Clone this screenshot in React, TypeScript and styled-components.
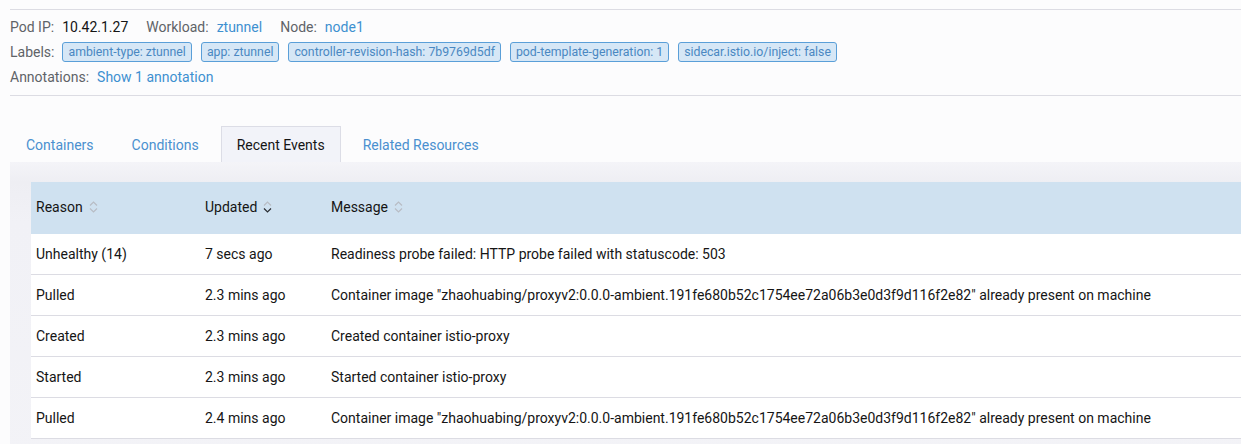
import styled, { createGlobalStyle } from "styled-components";

const GlobalStyle = createGlobalStyle`
  html, body {
    margin: 0;
    padding: 0;
    background: #fcfcfd;
    overflow: hidden;
  }
  body {
    font-family: Roboto, "Liberation Sans", sans-serif;
    font-size: 14px;
    color: #151515;
  }
`;

const Page = styled.div`
  padding: 9px 0 0 10px;
`;

const Details = styled.section`
  border-top: 1px solid #dcdce3;
  border-bottom: 1px solid #dcdce3;
  padding: 4px 0 6px 0;
  display: flex;
  flex-direction: column;
`;

const Row = styled.div`
  display: flex;
  align-items: center;
  height: 25px;
  gap: 6px;
`;

const Key = styled.span`
  color: #5f6368;
  margin-right: 2px;
`;

const Value = styled.span`
  color: #151515;
  margin-right: 12px;
`;

const Link = styled.a`
  color: #3e90d0;
  text-decoration: none;
  margin-right: 12px;
  cursor: pointer;
`;

const Chip = styled.span`
  display: inline-flex;
  align-items: center;
  height: 18px;
  padding: 0 5px;
  font-size: 12.3px;
  color: #4a88c2;
  background: #d6e7f6;
  border: 1px solid #5a9fd8;
  border-radius: 3px;
  margin-right: 3px;
`;

const Tabs = styled.nav`
  display: flex;
  margin-top: 30px;
`;

const Tab = styled.button<{ $active?: boolean }>`
  font: inherit;
  height: 36px;
  padding: 0 15px;
  margin-right: 6px;
  border: 1px solid ${(p) => (p.$active ? "#dcdde6" : "transparent")};
  border-bottom: none;
  background: ${(p) => (p.$active ? "#f2f3f9" : "transparent")};
  color: ${(p) => (p.$active ? "#151515" : "#4a90cf")};
  cursor: pointer;
`;

const Panel = styled.div`
  background: linear-gradient(#f4f4f8, #eeeef3 20px, #f1f1f6 60px, #f3f3f7);
  padding: 20px 0 0 21px;
  min-height: 300px;
`;

const Table = styled.table`
  width: 1300px;
  border-collapse: collapse;
  background: #ffffff;
`;

const HeadCell = styled.th<{ $w?: number }>`
  text-align: left;
  font-weight: 400;
  height: 52px;
  padding: 0 5px;
  background: #cfe1f0;
  width: ${(p) => (p.$w ? `${p.$w}px` : "auto")};
  white-space: nowrap;
`;

const Cell = styled.td`
  height: 40px;
  padding: 0 5px;
  border-bottom: 1px solid #dcdce3;
  white-space: nowrap;
`;

const SortWrap = styled.span`
  display: inline-block;
  vertical-align: middle;
  margin-left: 6px;
  position: relative;
  top: -1px;
`;

function SortIcon({ desc }: { desc?: boolean }) {
  return (
    <SortWrap>
      <svg width="9" height="12" viewBox="0 0 9 12">
        <path d="M1 4.5 L4.5 1 L8 4.5" fill="none" stroke="#b8bcc4" strokeWidth="1.2" />
        <path
          d="M1 7.5 L4.5 11 L8 7.5"
          fill="none"
          stroke={desc ? "#2a2d33" : "#b8bcc4"}
          strokeWidth="1.2"
        />
      </svg>
    </SortWrap>
  );
}

const labels = [
  "ambient-type: ztunnel",
  "app: ztunnel",
  "controller-revision-hash: 7b9769d5df",
  "pod-template-generation: 1",
  "sidecar.istio.io/inject: false",
];

const image =
  'Container image "zhaohuabing/proxyv2:0.0.0-ambient.191fe680b52c1754ee72a06b3e0d3f9d116f2e82" already present on machine';

const events = [
  { reason: "Unhealthy (14)", updated: "7 secs ago", message: "Readiness probe failed: HTTP probe failed with statuscode: 503" },
  { reason: "Pulled", updated: "2.3 mins ago", message: image },
  { reason: "Created", updated: "2.3 mins ago", message: "Created container istio-proxy" },
  { reason: "Started", updated: "2.3 mins ago", message: "Started container istio-proxy" },
  { reason: "Pulled", updated: "2.4 mins ago", message: image },
];

export default function App() {
  return (
    <>
      <GlobalStyle />
      <Page>
        <Details>
          <Row>
            <Key>Pod IP:</Key>
            <Value>10.42.1.27</Value>
            <Key>Workload:</Key>
            <Link>ztunnel</Link>
            <Key>Node:</Key>
            <Link>node1</Link>
          </Row>
          <Row>
            <Key>Labels:</Key>
            {labels.map((l) => (
              <Chip key={l}>{l}</Chip>
            ))}
          </Row>
          <Row>
            <Key>Annotations:</Key>
            <Link>Show 1 annotation</Link>
          </Row>
        </Details>
        <Tabs>
          <Tab>Containers</Tab>
          <Tab>Conditions</Tab>
          <Tab $active>Recent Events</Tab>
          <Tab>Related Resources</Tab>
        </Tabs>
        <Panel>
          <Table>
            <thead>
              <tr>
                <HeadCell $w={159}>
                  Reason
                  <SortIcon />
                </HeadCell>
                <HeadCell $w={116}>
                  Updated
                  <SortIcon desc />
                </HeadCell>
                <HeadCell>
                  Message
                  <SortIcon />
                </HeadCell>
              </tr>
            </thead>
            <tbody>
              {events.map((e, i) => (
                <tr key={i}>
                  <Cell>{e.reason}</Cell>
                  <Cell>{e.updated}</Cell>
                  <Cell>{e.message}</Cell>
                </tr>
              ))}
            </tbody>
          </Table>
        </Panel>
      </Page>
    </>
  );
}
